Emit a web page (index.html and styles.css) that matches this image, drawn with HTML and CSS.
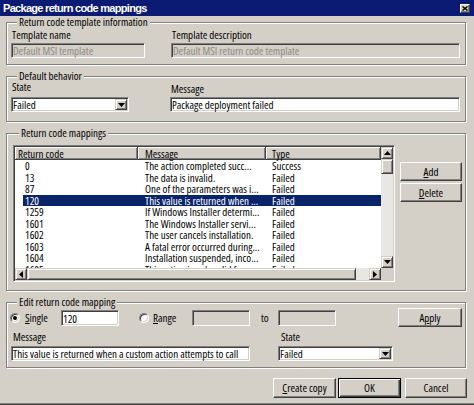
FILE: index.html
```html
<!DOCTYPE html>
<html lang="en">
<head>
<meta charset="utf-8">
<title>Package return code mappings</title>
<link rel="stylesheet" href="styles.css">
</head>
<body>
<div class="window">
  <div class="titlebar">
    <span class="title">Package return code mappings</span>
    <span class="close"><svg width="6" height="5" viewBox="0 0 6 5"><path d="M0.5 0.5 L5.5 4.5 M5.5 0.5 L0.5 4.5" stroke="#000" stroke-width="1.4" fill="none"/></svg></span>
  </div>
  <div class="content">
    <div class="group g1">
      <span class="legend">Return code template information</span>
      <div class="grow">
        <div class="field f-name">
          <span class="label">Template name</span>
          <div class="edit disabled">Default MSI template</div>
        </div>
        <div class="field f-desc">
          <span class="label">Template description</span>
          <div class="edit disabled">Default MSI return code template</div>
        </div>
      </div>
    </div>

    <div class="group g2">
      <span class="legend">Default behavior</span>
      <div class="grow">
        <div class="field f-state">
          <span class="label">State</span>
          <div class="combo"><span class="combo-text">Failed</span><span class="combo-btn"><svg width="7" height="4" viewBox="0 0 7 4"><path d="M0 0H7L3.5 4Z" fill="#000"/></svg></span></div>
        </div>
        <div class="field f-msg">
          <span class="label">Message</span>
          <div class="edit">Package deployment failed</div>
        </div>
      </div>
    </div>

    <div class="group g3">
      <span class="legend">Return code mappings</span>
      <div class="lv-wrap">
        <div class="listview">
          <div class="lv-main">
            <div class="lv-content">
              <div class="lv-header">
                <div class="hd h1">Return code</div>
                <div class="hd h2">Message</div>
                <div class="hd h3">Type</div>
              </div>
              <div class="lv-rows">
                <div class="lv-row"><span class="c1">0</span><span class="c2">The action completed succ...</span><span class="c3">Success</span></div>
                <div class="lv-row"><span class="c1">13</span><span class="c2">The data is invalid.</span><span class="c3">Failed</span></div>
                <div class="lv-row"><span class="c1">87</span><span class="c2">One of the parameters was i...</span><span class="c3">Failed</span></div>
                <div class="lv-row sel"><span class="c1">120</span><span class="c2">This value is returned when ...</span><span class="c3">Failed</span></div>
                <div class="lv-row"><span class="c1">1259</span><span class="c2">If Windows Installer determi...</span><span class="c3">Failed</span></div>
                <div class="lv-row"><span class="c1">1601</span><span class="c2">The Windows Installer servi...</span><span class="c3">Failed</span></div>
                <div class="lv-row"><span class="c1">1602</span><span class="c2">The user cancels installation.</span><span class="c3">Failed</span></div>
                <div class="lv-row"><span class="c1">1603</span><span class="c2">A fatal error occurred during...</span><span class="c3">Failed</span></div>
                <div class="lv-row"><span class="c1">1604</span><span class="c2">Installation suspended, inco...</span><span class="c3">Failed</span></div>
                <div class="lv-row"><span class="c1">1605</span><span class="c2">This action is only valid f...</span><span class="c3">Failed</span></div>
              </div>
            </div>
            <div class="vscroll">
              <div class="sb-btn"><svg width="7" height="4" viewBox="0 0 7 4"><path d="M3.5 0L7 4H0Z" fill="#000"/></svg></div>
              <div class="sb-thumb v"></div>
              <div class="sb-track"></div>
              <div class="sb-btn"><svg width="7" height="4" viewBox="0 0 7 4"><path d="M0 0H7L3.5 4Z" fill="#000"/></svg></div>
            </div>
          </div>
          <div class="lv-bottom">
            <div class="hscroll">
              <div class="sb-btn"><svg width="4" height="7" viewBox="0 0 4 7"><path d="M4 0V7L0 3.5Z" fill="#000"/></svg></div>
              <div class="sb-thumb h"></div>
              <div class="sb-track"></div>
              <div class="sb-btn"><svg width="4" height="7" viewBox="0 0 4 7"><path d="M0 0L4 3.5L0 7Z" fill="#000"/></svg></div>
            </div>
            <div class="sb-corner"></div>
          </div>
        </div>
        <div class="btn-col">
          <div class="btn"><span><u>A</u>dd</span></div>
          <div class="btn"><span><u>D</u>elete</span></div>
        </div>
      </div>
    </div>

    <div class="group g4">
      <span class="legend">Edit return code mapping</span>
      <div class="erow">
        <div class="opt opt-single"><span class="radio"><span class="dot"></span></span><span class="opt-label"><u>S</u>ingle</span></div>
        <div class="edit num">120</div>
        <div class="opt opt-range"><span class="radio"></span><span class="opt-label"><u>R</u>ange</span></div>
        <div class="edit num disabled"></div>
        <span class="to">to</span>
        <div class="edit num disabled"></div>
        <div class="btn apply"><span>A<u>p</u>ply</span></div>
      </div>
      <div class="erow2">
        <div class="field f-emsg">
          <span class="label">Message</span>
          <div class="edit">This value is returned when a custom action attempts to call</div>
        </div>
        <div class="field f-estate">
          <span class="label">State</span>
          <div class="combo"><span class="combo-text">Failed</span><span class="combo-btn"><svg width="7" height="4" viewBox="0 0 7 4"><path d="M0 0H7L3.5 4Z" fill="#000"/></svg></span></div>
        </div>
      </div>
    </div>

    <div class="bottom">
      <div class="btn b-copy"><span><u>C</u>reate copy</span></div>
      <div class="btn b-ok default"><span>OK</span></div>
      <div class="btn b-cancel"><span>Cancel</span></div>
    </div>
  </div>
</div>
</body>
</html>
```

FILE: styles.css
```css
* { box-sizing: border-box; }
html, body { margin: 0; padding: 0; }
body {
  width: 474px;
  height: 405px;
  overflow: hidden;
  background: #d4d0c8;
  color: #000;
  font-family: "Open Sans", "Liberation Sans", Arial, sans-serif;
  font-stretch: 75%;
  font-size: 11px;
}
u { text-decoration: underline; text-underline-offset: 1px; }

.window {
  height: 405px;
  display: flex;
  flex-direction: column;
  border-bottom: 1px solid #404040;
  box-shadow: inset 0 -1px 0 #808080;
}

.titlebar {
  flex: none;
  height: 16px;
  background: #0b1a73;
  color: #fff;
  display: flex;
  align-items: center;
  justify-content: space-between;
  padding: 0 4px 0 3px;
}
.title {
  font-family: "Liberation Sans", Arial, sans-serif;
  font-stretch: normal;
  font-weight: bold;
  font-size: 11px;
  letter-spacing: -0.7px;
  line-height: 16px;
  white-space: nowrap;
}
.close {
  width: 10px;
  height: 9px;
  margin-top: 1px;
  background: #d4d0c8;
  border: 1px solid;
  border-color: #fff #404040 #404040 #fff;
  box-shadow: inset -1px -1px 0 #808080;
  display: flex;
  align-items: center;
  justify-content: center;
}
.close svg { display: block; }

.content {
  flex: 1;
  display: flex;
  flex-direction: column;
  padding: 6px 8px 0 6px;
}

.group {
  flex: none;
  display: flex;
  flex-direction: column;
  border: 1px solid #808080;
  box-shadow: inset 1px 1px 0 #fff, 1px 1px 0 #fff;
}
.legend {
  align-self: flex-start;
  height: 12px;
  line-height: 12px;
  margin: -7px 0 0 6px;
  padding: 0 2px;
  background: #d4d0c8;
  white-space: nowrap;
}
.g1 { padding: 0 5px 6px 4px; }
.g2 { margin-top: 11px; padding: 0 5px 9px 4px; }
.g3 { margin-top: 11px; padding: 0 3px 8px 6px; }
.g4 { margin-top: 11px; padding: 0 3px 6px 4px; }

.grow { display: flex; }
.g2 .grow { margin-top: -2px; }
.field { display: flex; flex-direction: column; flex: none; }
.label {
  display: block;
  height: 13px;
  line-height: 13px;
  padding-left: 1px;
  white-space: nowrap;
}
.f-name { width: 134px; }
.f-desc { flex: 1; margin-left: 26px; }
.f-name .edit, .f-desc .edit { margin-top: 2px; }
.f-state { width: 118px; }
.f-state .combo { margin-top: 4px; }
.f-msg { flex: 1; margin-left: 41px; }
.f-msg .label { margin-top: 2px; }
.f-msg .edit { margin-top: 2px; }

/* sunken edit */
.edit, .combo {
  height: 15px;
  background: #fff;
  border: 1px solid;
  border-color: #808080 #fff #fff #808080;
  box-shadow: inset 1px 1px 0 #404040, inset -1px -1px 0 #d4d0c8;
}
.edit {
  padding: 1px 0 0 1px;
  line-height: 11px;
  white-space: nowrap;
  overflow-x: clip;
  overflow-y: visible;
}
.edit.disabled {
  background: #d4d0c8;
  color: #8d8b87;
}
.combo { display: flex; }
.combo-text {
  flex: 1;
  padding: 1px 0 0 1px;
  line-height: 11px;
  white-space: nowrap;
}
.combo-btn {
  width: 12px;
  margin: 1px;
  flex: none;
}

/* raised parts */
.combo-btn, .sb-btn, .sb-thumb {
  background: #d4d0c8;
  border: 1px solid;
  border-color: #d4d0c8 #404040 #404040 #d4d0c8;
  box-shadow: inset 1px 1px 0 #fff, inset -1px -1px 0 #808080;
  display: flex;
  align-items: center;
  justify-content: center;
}
.combo-btn svg, .sb-btn svg { display: block; }

/* list view */
.lv-wrap { display: flex; margin-top: 6px; }
.listview {
  width: 382px;
  height: 137px;
  flex: none;
  background: #fff;
  border: 1px solid;
  border-color: #808080 #fff #fff #808080;
  box-shadow: inset 1px 1px 0 #404040, inset -1px -1px 0 #d4d0c8;
  padding: 1px;
  display: flex;
  flex-direction: column;
}
.lv-main { display: flex; height: 121px; flex: none; }
.lv-content {
  flex: 1;
  display: flex;
  flex-direction: column;
  overflow: hidden;
  background: #fff;
}
.lv-header { display: flex; height: 13px; flex: none; }
.hd {
  height: 13px;
  padding-top: 1px;
  line-height: 12px;
  background: #d4d0c8;
  border-right: 1px solid #404040;
  border-bottom: 1px solid #404040;
  box-shadow: inset 1px 1px 0 #fff, inset -1px -1px 0 #808080;
  white-space: nowrap;
  overflow-x: clip;
}
.h1 { width: 123px; padding-left: 3px; }
.h2 { width: 128px; padding-left: 7px; }
.h3 { flex: 1; padding-left: 6px; }
.lv-rows { flex: 1; overflow: hidden; }
.lv-row {
  display: flex;
  height: 11.5px;
  line-height: 11.5px;
  margin-left: 8px;
  white-space: nowrap;
}
.lv-row.sel { background: #0a246a; color: #fff; }
.c1 { width: 115px; padding-left: 2px; flex: none; }
.c2 { width: 128px; padding-left: 7px; flex: none; overflow-x: clip; overflow-y: visible; }
.c3 { flex: 1; padding-left: 6px; }

.vscroll {
  width: 12px;
  flex: none;
  display: flex;
  flex-direction: column;
  background: #e9e7e3;
}
.sb-btn { width: 12px; height: 12px; flex: none; }
.sb-thumb.v { height: 15px; flex: none; }
.sb-track { flex: 1; }
.lv-bottom { display: flex; height: 12px; flex: none; }
.hscroll { flex: 1; display: flex; background: #e9e7e3; }
.sb-thumb.h { width: 329px; flex: none; }
.sb-corner { width: 12px; flex: none; background: #d4d0c8; }

/* push buttons */
.btn {
  background: #d4d0c8;
  border: 1px solid;
  border-color: #fff #404040 #404040 #fff;
  box-shadow: inset -1px -1px 0 #808080;
  display: flex;
  align-items: center;
  justify-content: center;
  white-space: nowrap;
  flex: none;
  line-height: 12px;
}
.btn.default {
  border-color: #000;
  box-shadow: inset 1px 1px 0 #fff, inset -1px -1px 0 #404040, inset -2px -2px 0 #808080;
}
.btn-col {
  display: flex;
  flex-direction: column;
  gap: 2px;
  padding-top: 17px;
  margin-left: 5px;
  width: 62px;
}
.btn-col .btn { height: 19px; }

/* edit mapping */
.erow { display: flex; align-items: center; height: 19px; }
.opt { display: flex; align-items: center; flex: none; }
.opt-single { width: 50px; }
.opt-single .radio { margin-left: -1px; }
.opt-single .opt-label { margin-left: 5px; }
.opt-range { width: 53px; margin-left: 20px; }
.opt-range .opt-label { margin-left: 4px; }
.radio {
  width: 10px;
  height: 10px;
  flex: none;
  border-radius: 50%;
  background: #fff;
  border: 1px solid;
  border-color: #808080 #fff #fff #808080;
  box-shadow: inset 1px 1px 0 #404040, inset -1px -1px 0 #d4d0c8;
  display: flex;
  align-items: center;
  justify-content: center;
}
.dot { width: 4px; height: 4px; border-radius: 50%; background: #000; }
.edit.num { width: 58px; height: 16px; flex: none; padding-top: 2px; }
.to { width: 28px; padding-left: 11px; flex: none; }
.btn.apply { margin-left: auto; width: 64px; height: 19px; }

.erow2 { display: flex; margin-top: 3px; }
.erow2 .edit, .erow2 .combo { margin-top: 3px; }
.f-emsg { width: 239px; }
.f-emsg .label { padding-left: 2px; }
.f-estate { width: 115px; margin-left: 28px; }
.f-estate .label { padding-left: 3px; }

.bottom {
  display: flex;
  justify-content: flex-end;
  margin-top: 10px;
  margin-right: -1px;
}
.bottom .btn { height: 20px; }
.b-copy { width: 63px; }
.b-ok { width: 63px; margin-left: 2px; }
.b-cancel { width: 62px; margin-left: 4px; }
```
